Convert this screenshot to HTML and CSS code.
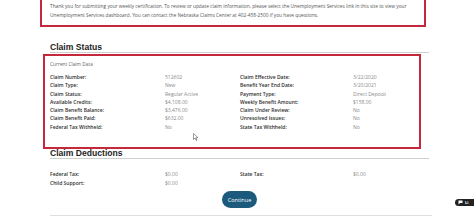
FILE: index.html
```html
<!DOCTYPE html>
<html>
<head>
<meta charset="utf-8">
<link rel="stylesheet" href="styles.css">
</head>
<body>
<div class="notice">Thank you for submitting your weekly certification. To review or update claim information, please select the Unemployment Services link in this site to view your<br>Unemployment Services dashboard. You can contact the Nebraska Claims Center at 402-458-2500 if you have questions.</div>
<div class="content">
  <h2 class="heading">Claim Status</h2>
  <div class="claim-box">
    <div class="caption">Current Claim Data</div>
    <div class="grid">
      <span class="label">Claim Number:</span><span class="value">512602</span><span class="label">Claim Effective Date:</span><span class="value">3/22/2020</span>
      <span class="label">Claim Type:</span><span class="value">New</span><span class="label">Benefit Year End Date:</span><span class="value">3/20/2021</span>
      <span class="label">Claim Status:</span><span class="value">Regular Active</span><span class="label">Payment Type:</span><span class="value">Direct Deposit</span>
      <span class="label">Available Credits:</span><span class="value">$4,108.00</span><span class="label">Weekly Benefit Amount:</span><span class="value">$158.00</span>
      <span class="label">Claim Benefit Balance:</span><span class="value">$3,476.00</span><span class="label">Claim Under Review:</span><span class="value">No</span>
      <span class="label">Claim Benefit Paid:</span><span class="value">$632.00</span><span class="label">Unresolved Issues:</span><span class="value">No</span>
      <span class="label">Federal Tax Withheld:</span><span class="value">No</span><span class="label">State Tax Withheld:</span><span class="value">No</span>
    </div>
  </div>
  <h2 class="heading heading-ded">Claim Deductions</h2>
  <div class="grid grid-ded">
    <span class="label">Federal Tax:</span><span class="value">$0.00</span><span class="label">State Tax:</span><span class="value">$0.00</span>
    <span class="label">Child Support:</span><span class="value">$0.00</span><span></span><span></span>
  </div>
  <div class="actions"><button class="btn">Continue</button></div>
  <div class="rule"></div>
</div>
<svg class="cursor" width="6" height="8" viewBox="0 0 6 8"><path d="M0.5 0.5 L0.5 6.5 L2 5 L3.2 7.5 L4 7.1 L2.9 4.7 L5 4.7 Z" fill="#fff" stroke="#555" stroke-width="0.6"/></svg>
<div class="badge"><svg width="5" height="5" viewBox="0 0 5 5"><path d="M0.5 0.5 H4.5 V3 H2 L0.5 4.5 Z" fill="#fff"/></svg><span>Li</span></div>
</body>
</html>
```
FILE: styles.css
```css
html, body {
  margin: 0;
  padding: 0;
}
body {
  width: 474px;
  height: 218px;
  overflow: hidden;
  background: #fff;
  font-family: "Open Sans", "Liberation Sans", sans-serif;
  position: relative;
}
.notice {
  box-sizing: border-box;
  margin: -6px 0 0 40px;
  width: 386px;
  height: 33px;
  border: 2px solid #c4283a;
  padding: 6px 0 0 8px;
  font-size: 4.8px;
  line-height: 9px;
  color: #555;
  white-space: nowrap;
  overflow: hidden;
}
.content {
  margin-left: 50px;
  width: 379px;
}
.heading {
  margin: 15px 0 0;
  font-family: "Liberation Sans", Arial, sans-serif;
  font-size: 8.6px;
  font-weight: bold;
  line-height: 10px;
  color: #1e1e1e;
  border-bottom: 1px solid #cfcfcf;
}
.heading-ded {
  margin-top: 0;
  line-height: 9px;
}
.claim-box {
  box-sizing: border-box;
  margin: 1px 0 0 -7px;
  width: 378px;
  height: 95px;
  border: 2px solid #c4283a;
  padding: 4px 0 0 5px;
}
.caption {
  font-size: 4.8px;
  line-height: 8px;
  color: #666;
}
.grid {
  display: grid;
  grid-template-columns: 115px 75px 113px 1fr;
  grid-auto-rows: 8.3px;
  align-items: center;
  margin-top: 5px;
  font-size: 5px;
  line-height: 8.3px;
}
.grid-ded {
  grid-auto-rows: 9px;
  line-height: 9px;
  margin-top: 11px;
}
.label {
  font-weight: 600;
  color: #2e2e2e;
}
.value {
  color: #8a8a8a;
}
.actions {
  display: flex;
  justify-content: center;
  margin-top: 3px;
}
.btn {
  width: 35px;
  height: 17px;
  border: none;
  border-radius: 9px;
  background: #1b5a7c;
  color: #fff;
  font-family: "Open Sans", sans-serif;
  font-size: 5.6px;
  padding: 0;
}
.rule {
  margin-top: 7px;
  width: 382px;
  height: 1px;
  background: #dedede;
}
.cursor {
  position: absolute;
  left: 193px;
  top: 133px;
}
.badge {
  position: absolute;
  left: 455px;
  top: 199px;
  width: 26px;
  height: 7px;
  border-radius: 4px;
  background: #222;
  color: #fff;
  display: flex;
  align-items: center;
  gap: 2px;
  padding-left: 3px;
  font-size: 4px;
  font-weight: bold;
  box-sizing: border-box;
}
```
